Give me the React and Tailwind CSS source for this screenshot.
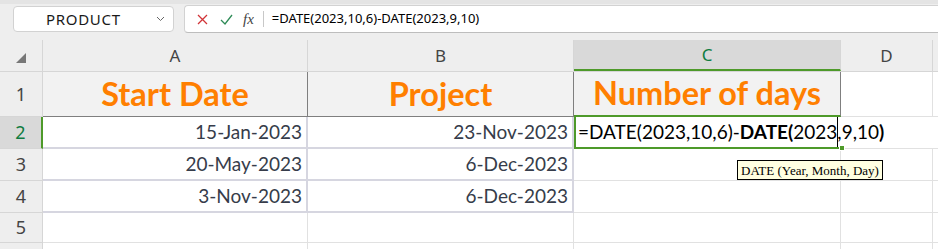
import React from 'react';

const cal = { fontFamily: 'Lato, "Open Sans", sans-serif' };

const cols = [
  { key: 'A', w: 'w-[265px]' },
  { key: 'B', w: 'w-[266px]' },
  { key: 'C', w: 'w-[267px]' },
  { key: 'D', w: 'w-[92px]' },
];

const rows = [
  ['15-Jan-2023', '23-Nov-2023'],
  ['20-May-2023', '6-Dec-2023'],
  ['3-Nov-2023', '6-Dec-2023'],
];

const FormulaText = () => (
  <span className="flex items-center">
    =DATE(2023,10,6)-<b>DATE(</b>2023
    <span className="inline-block w-px h-[30px] bg-black -mr-px" />
    ,9,10<b>)</b>
  </span>
);

const App = () => {
  return (
    <div className="w-[938px] h-[249px] overflow-hidden bg-white text-[#222]" style={{ fontFamily: '"Noto Sans", "Open Sans", sans-serif' }}>
      {/* top bar */}
      <div className="h-[40px] bg-[#eeeeee] border-t-[4px] border-[#e4e4e4] flex items-start">
        <div className="ml-[13px] mt-[2px] w-[161px] h-[26px] bg-white rounded-[4px] border border-[#d2d2d2] flex items-center relative">
          <span className="ml-[32px] text-[15px] tracking-[0.7px] text-[#1a1a1a]">PRODUCT</span>
          <svg className="absolute right-[8px] top-[9px]" width="9" height="6" viewBox="0 0 9 6">
            <path d="M1 1l3.5 3.5L8 1" fill="none" stroke="#666" strokeWidth="1" />
          </svg>
        </div>
        <div className="ml-[10px] mt-[1px] flex-1 h-[28px] bg-white rounded-l-[4px] border border-r-0 border-[#d2d2d2] border-b-[#bdbdbd] flex items-center">
          <svg className="ml-[12px]" width="11" height="11" viewBox="0 0 11 11">
            <path d="M1 1l9 9M10 1l-9 9" stroke="#d13438" strokeWidth="1.3" />
          </svg>
          <svg className="ml-[12px]" width="13" height="11" viewBox="0 0 13 11">
            <path d="M1 6l4 4 7-9" fill="none" stroke="#2e8b57" strokeWidth="1.3" />
          </svg>
          <span className="ml-[10px] text-[15px] italic text-[#444]" style={{ fontFamily: '"Liberation Serif", serif' }}>fx</span>
          <div className="ml-[9px] w-px h-[16px] bg-[#c8c8c8]" />
          <span className="ml-[8px] text-[13px] text-black" style={{ fontFamily: '"Noto Sans", sans-serif' }}>=DATE(2023,10,6)-DATE(2023,9,10)</span>
        </div>
      </div>

      {/* column headers */}
      <div className="flex h-[32px] bg-[#eeeeee] border-b border-[#d6d6d6]">
        <div className="w-[43px] border-r border-[#d6d6d6] flex items-center justify-center">
          <svg width="10" height="10" viewBox="0 0 10 10" className="mt-[4px]">
            <path d="M10 0V10H0Z" fill="#777" />
          </svg>
        </div>
        {cols.map((c) => (
          <div
            key={c.key}
            className={`${c.w} flex items-center justify-center text-[17px] border-r border-[#d6d6d6] ${c.key === 'C' ? 'bg-[#d9d9d9] text-[#107c41] border-b-2 border-b-[#4e9a2a]' : 'text-[#444]'}`}
          >
            {c.key}
          </div>
        ))}
        <div className="flex-1" />
      </div>

      {/* row 1 */}
      <div className="flex h-[45px]">
        <div className="w-[43px] bg-[#eeeeee] border-r border-b border-[#d6d6d6] flex items-center justify-center text-[18px] text-[#444]">1</div>
        <div className="w-[265px] bg-[#f2f2f2] border-r border-b border-[#7f7f7f] flex items-center justify-center text-[32.5px] font-bold text-[#ff7f00]" style={cal}>Start Date</div>
        <div className="w-[266px] bg-[#f2f2f2] border-r border-b border-[#7f7f7f] flex items-center justify-center text-[32.5px] font-bold text-[#ff7f00]" style={cal}>Project</div>
        <div className="w-[267px] bg-[#f2f2f2] border-r border-b-2 border-[#7f7f7f] border-b-[#4e9a2a] flex items-center justify-center text-[32.5px] font-bold text-[#ff7f00]" style={cal}>Number of days</div>
        <div className="w-[92px] border-r border-b border-[#e1e1e1]" />
        <div className="flex-1 border-b border-[#e1e1e1]" />
      </div>

      {/* data rows */}
      {rows.map((r, i) => (
        <div key={i} className="flex h-[32px]">
          <div className={`w-[43px] border-b border-[#d6d6d6] flex items-center justify-center text-[18px] ${i === 0 ? 'bg-[#d9d9d9] text-[#107c41] border-r-2 border-r-[#4e9a2a]' : 'bg-[#eeeeee] text-[#444] border-r border-r-[#d6d6d6]'}`}>{i + 2}</div>
          <div className="w-[265px] border-r-2 border-b-2 border-[#d6d6e0] flex items-center justify-end pr-[4px] text-[19px] text-[#363c4a]" style={cal}>{r[0]}</div>
          <div className="w-[266px] border-r-2 border-b-2 border-[#d6d6e0] flex items-center justify-end pr-[4px] text-[19px] text-[#363c4a]" style={cal}>{r[1]}</div>
          {i === 0 ? (
            <div className="w-[267px] border-l-2 border-b-2 border-[#4e9a2a] relative flex items-center pl-[2px] text-[19px] text-black whitespace-nowrap z-10" style={cal}>
              <FormulaText />
              <div className="absolute right-[-4px] bottom-[-4px] w-[6px] h-[6px] bg-[#4e9a2a] border border-white" />
            </div>
          ) : (
            <div className="w-[267px] border-r border-b border-[#e1e1e1]" />
          )}
          <div className={`w-[92px] border-b border-[#e1e1e1] ${i === 0 ? '' : 'border-r'}`} />
          <div className="flex-1 border-b border-[#e1e1e1]" />
        </div>
      ))}

      {/* row 5 */}
      <div className="flex h-[30px]">
        <div className="w-[43px] bg-[#eeeeee] border-r border-b border-[#d6d6d6] flex items-center justify-center text-[18px] text-[#444]">5</div>
        <div className="w-[265px] border-r border-b border-[#e1e1e1]" />
        <div className="w-[266px] border-r border-b border-[#e1e1e1]" />
        <div className="w-[267px] border-r border-b border-[#e1e1e1]" />
        <div className="w-[92px] border-r border-b border-[#e1e1e1]" />
        <div className="flex-1 border-b border-[#e1e1e1]" />
      </div>
      <div className="flex h-[10px]">
        <div className="w-[43px] bg-[#eeeeee] border-r border-[#d6d6d6]" />
        <div className="w-[265px] border-r border-[#e1e1e1]" />
        <div className="w-[266px] border-r border-[#e1e1e1]" />
        <div className="w-[267px] border-r border-[#e1e1e1]" />
        <div className="w-[92px] border-r border-[#e1e1e1]" />
      </div>

      {/* function tooltip */}
      <div className="absolute left-[737px] top-[160px] h-[20px] px-[3px] bg-[#ffffe1] border border-black text-[13px] text-black flex items-center leading-none whitespace-nowrap z-20" style={{ fontFamily: '"Liberation Serif", serif' }}>
        DATE (Year, Month, Day)
      </div>
    </div>
  );
};

export default App;
